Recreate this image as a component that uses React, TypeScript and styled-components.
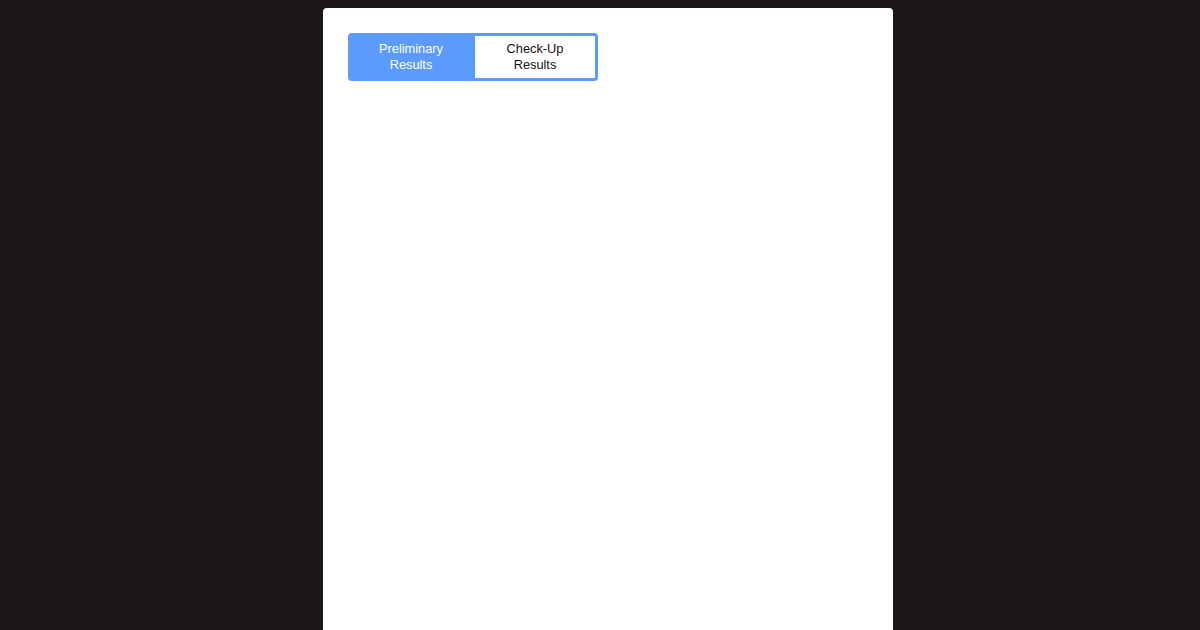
import styled, { createGlobalStyle } from 'styled-components';

const GlobalStyle = createGlobalStyle`
  html, body {
    margin: 0;
    background: #1b1716;
  }
  body {
    padding: 8px 0 0 16px;
    font-family: "Liberation Sans", Arial, sans-serif;
  }
`;

const Page = styled.div`
  display: flex;
  justify-content: center;
`;

const Card = styled.div`
  width: 570px;
  min-height: 640px;
  box-sizing: border-box;
  padding: 25px;
  background: #fff;
  border-radius: 4px 4px 0 0;
`;

const TabGroup = styled.div`
  display: flex;
  width: 250px;
  height: 48px;
  box-sizing: border-box;
  border: 3px solid #5c9bfc;
  border-radius: 4px;
  overflow: hidden;
`;

const Tab = styled.button<{ $active?: boolean }>`
  flex: ${p => (p.$active ? '0 0 124px' : '1')};
  display: flex;
  align-items: center;
  justify-content: center;
  border: none;
  padding: ${p => (p.$active ? '0 4px 0 0' : '0')};
  margin: 0;
  font-family: "Liberation Sans", Arial, sans-serif;
  font-size: 12.8px;
  line-height: 16px;
  text-align: center;
  cursor: pointer;
  background: ${p => (p.$active ? '#5c9bfc' : '#fff')};
  color: ${p => (p.$active ? '#fff' : '#111')};
`;

export default function App() {
  return (
    <>
      <GlobalStyle />
      <Page>
        <Card>
          <TabGroup>
            <Tab $active>Preliminary<br />Results</Tab>
            <Tab>Check-Up<br />Results</Tab>
          </TabGroup>
        </Card>
      </Page>
    </>
  );
}
